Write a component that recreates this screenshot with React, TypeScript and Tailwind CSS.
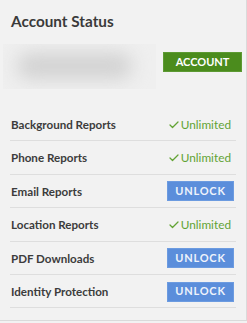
import { Check } from 'lucide-react'

const rows = [
  { label: 'Background Reports', unlimited: true },
  { label: 'Phone Reports', unlimited: true },
  { label: 'Email Reports', unlimited: false },
  { label: 'Location Reports', unlimited: true },
  { label: 'PDF Downloads', unlimited: false },
  { label: 'Identity Protection', unlimited: false },
]

export default function App() {
  return (
    <div className="w-[247px] h-[323px] bg-[#f2f2f2]" style={{ fontFamily: 'Lato, "Open Sans", sans-serif' }}>
      <div className="w-[247px] h-[321px] border-r border-b border-[#dadada] flex flex-col">
        <h1 className="pl-[11px] pt-[10px] text-[15.3px] leading-[22px] font-bold text-[#3a3a3a]">Account Status</h1>

        <div className="mt-[12px] flex items-start">
          <div className="ml-[3px] w-[153px] h-[45px] bg-[#efefef] overflow-hidden relative">
            <div className="absolute left-[14px] top-[9px] w-[115px] h-[26px] rounded-full bg-[#d2d2d2] blur-[9px]" />
          </div>
          <button className="ml-[7px] mt-[8px] w-[79px] h-[20px] bg-[#4b8c1d] border border-[#5d9a33] text-white text-[11px] font-bold flex items-center justify-center">
            ACCOUNT
          </button>
        </div>

        <div className="mt-[19px] mx-[10px] flex flex-col">
          {rows.map((r) => (
            <div key={r.label} className="h-[33.4px] pt-[1px] border-b border-[#dedede] flex items-center justify-between pl-[1px] pr-[2px]">
              <span className="text-[11.6px] font-bold text-[#3c3c3c]">{r.label}</span>
              {r.unlimited ? (
                <span className="flex items-center text-[11.8px] text-[#62a334] mr-[3px]">
                  <Check size={12} strokeWidth={2.5} className="mr-[1px]" />
                  Unlimited
                </span>
              ) : (
                <button className="w-[67px] h-[20px] bg-[#5b8edb] border border-[#6c9be0] text-[#eef3fb] text-[11px] font-bold tracking-[0.8px] flex items-center justify-center">
                  UNLOCK
                </button>
              )}
            </div>
          ))}
        </div>
      </div>
    </div>
  )
}
